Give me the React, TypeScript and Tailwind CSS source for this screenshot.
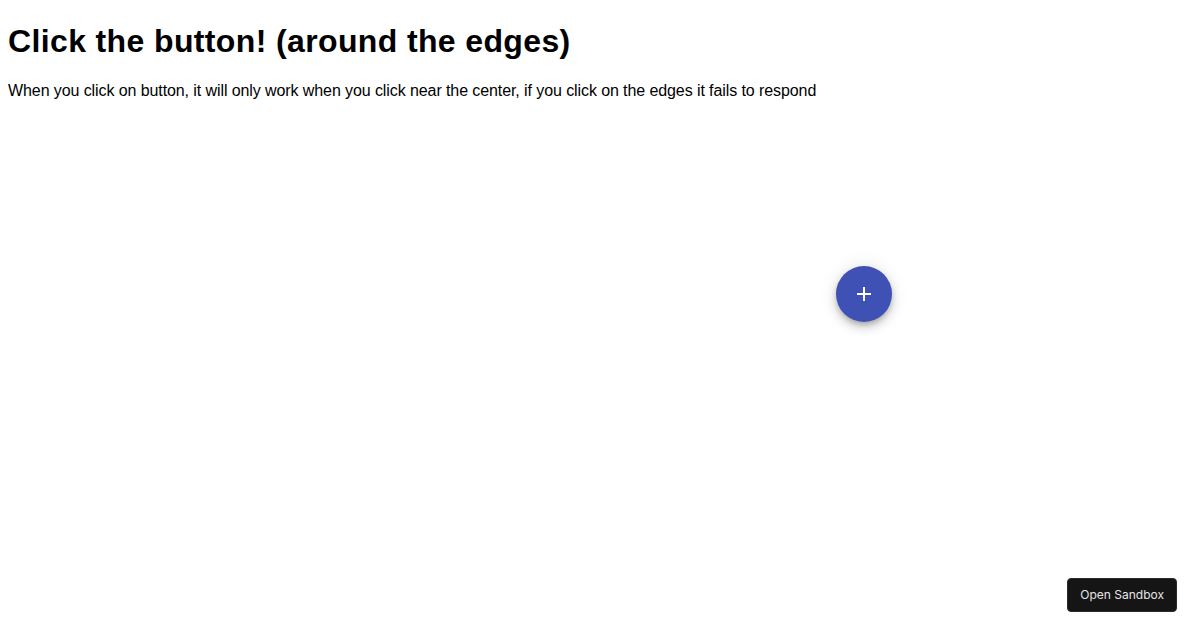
import React from "react";

export default function App() {
  return (
    <div className="min-h-[630px] w-full bg-white text-black" style={{ fontFamily: '"Liberation Sans", Arial, sans-serif' }}>
      <div className="px-2 pt-[23px]">
        <h1 className="m-0 text-[32px] font-bold leading-[37px] tracking-[0.37px]">Click the button! (around the edges)</h1>
        <p className="mt-[22px] text-[16px] leading-[18px] tracking-[-0.09px]">
          When you click on button, it will only work when you click near the center, if you click on the edges it fails to respond
        </p>
        <div className="mt-[166px] pl-[828px]">
          <button
            type="button"
            className="flex h-14 w-14 items-center justify-center rounded-full bg-[#3f51b5] text-white shadow-[0_3px_5px_-1px_rgba(0,0,0,0.2),0_6px_10px_0_rgba(0,0,0,0.14),0_1px_18px_0_rgba(0,0,0,0.12)]"
          >
            <svg width="24" height="24" viewBox="0 0 24 24" fill="currentColor">
              <path d="M19 13h-6v6h-2v-6H5v-2h6V5h2v6h6v2z" />
            </svg>
          </button>
        </div>
      </div>
      <div
        className="fixed bottom-[18px] right-[23px] flex h-[34px] items-center rounded-[4px] border border-[#2a2a2a] bg-[#151515] px-3 text-[12px] text-[#e5e5e5]"
        style={{ fontFamily: 'Inter, "Noto Sans", sans-serif' }}
      >
        Open Sandbox
      </div>
    </div>
  );
}
